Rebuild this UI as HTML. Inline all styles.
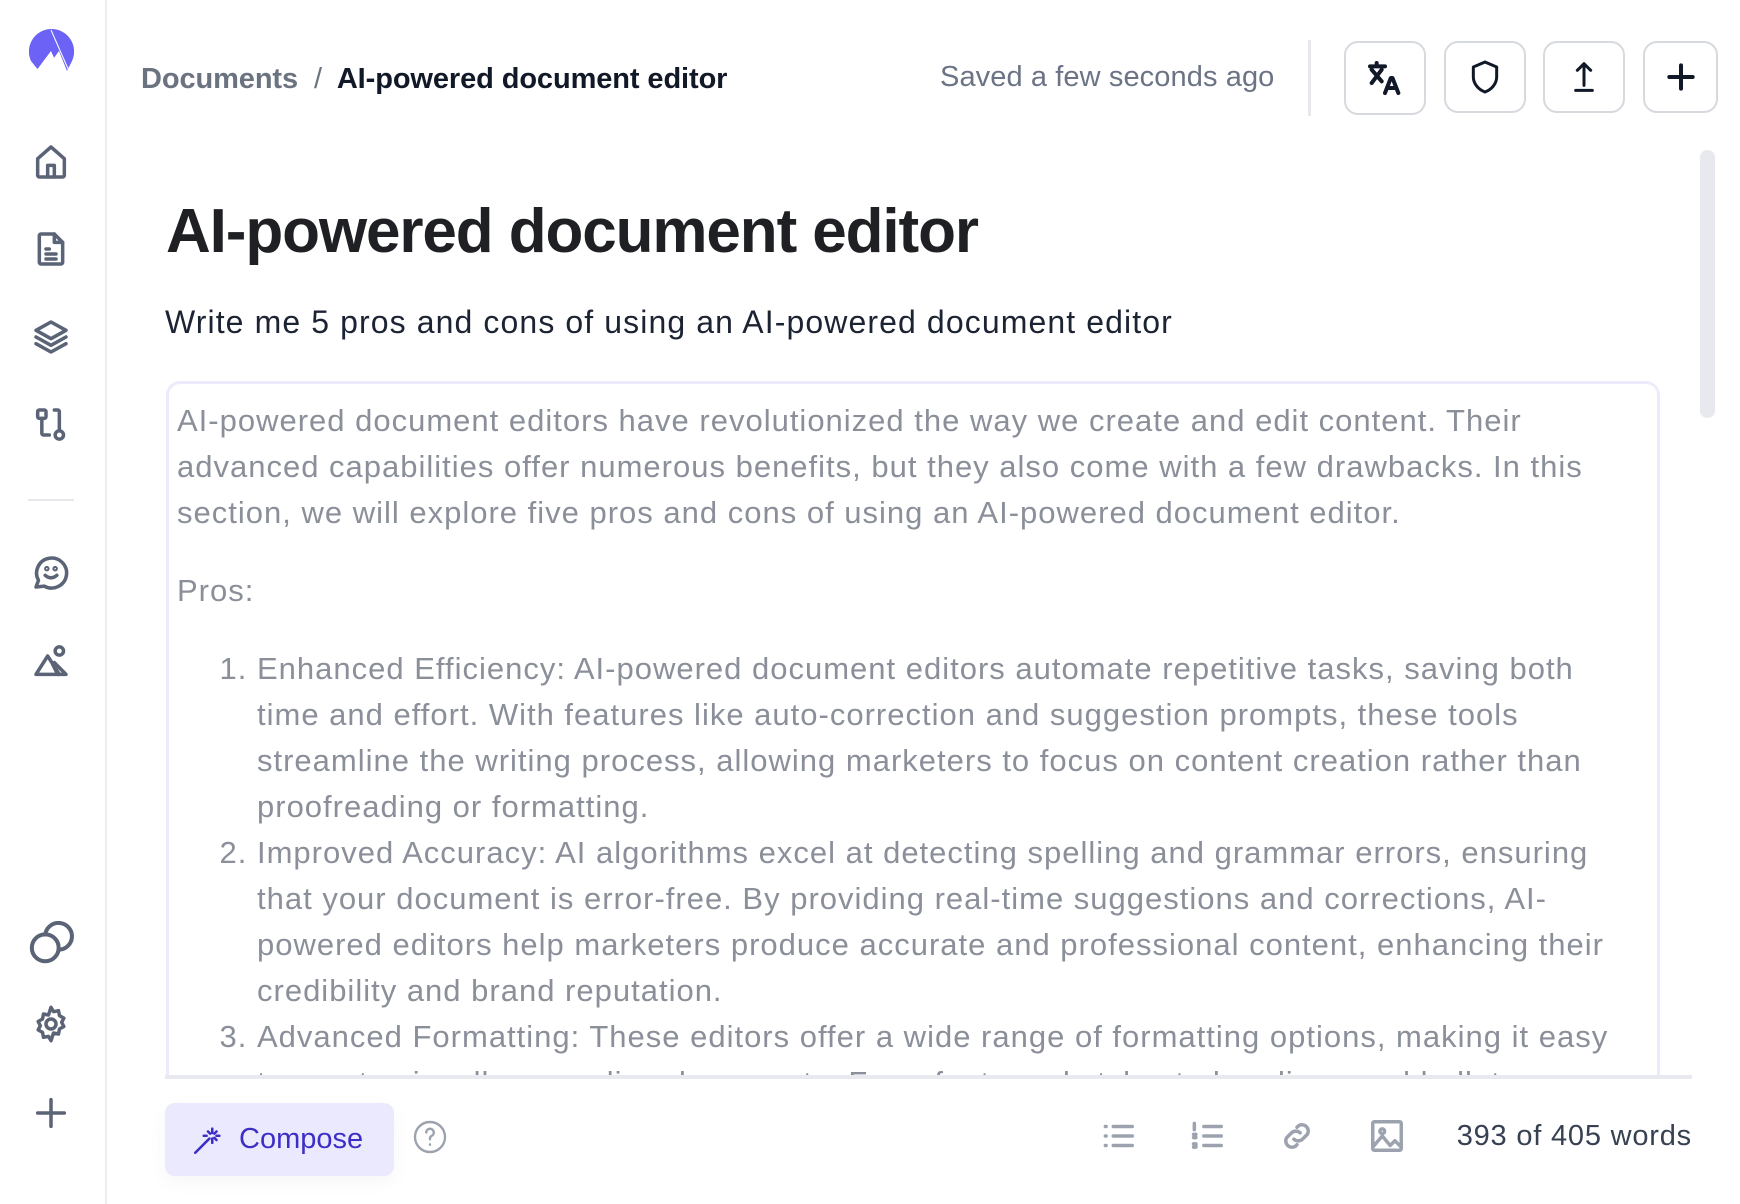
<!DOCTYPE html>
<html><head><meta charset="utf-8"><style>
*{margin:0;padding:0;box-sizing:border-box}
body{width:1740px;height:1204px;background:#fff;font-family:"Liberation Sans",sans-serif;position:relative;overflow:hidden}
.side{position:absolute;left:0;top:0;width:107px;height:1204px;border-right:2px solid #eceef2}
.ic{position:absolute;left:31px;width:40px;height:40px}
.ic svg{width:40px;height:40px;fill:none;stroke:#5b6477;stroke-width:2.1;stroke-linecap:round;stroke-linejoin:round}
.abs{position:absolute}
.btn{position:absolute;top:41px;height:74px;border:2px solid #d6d9de;border-radius:14px;display:flex;align-items:center;justify-content:center}
.btn svg{width:40px;height:40px;fill:none;stroke:#111827;stroke-width:2.4;stroke-linecap:round;stroke-linejoin:round}
.box{position:absolute;left:166px;top:381px;width:1494px;height:695px;border:3px solid #ecebfd;border-bottom:none;border-radius:14px 14px 0 0;overflow:hidden;color:#8a8f99;font-size:31px;letter-spacing:1px;line-height:46px;padding:14px 0 0 8px}
.box ol{margin-left:40px;padding-left:40px;padding-right:40px}
.tb svg{width:38px;height:38px;fill:none;stroke:#9ca3af;stroke-width:2.2;stroke-linecap:round;stroke-linejoin:round}
</style></head><body>
<div class="side">
 <svg class="abs" style="left:29px;top:29px" width="45" height="45" viewBox="0 0 45 45"><path d="M22.5 0A22.5 22.5 0 0 1 43 32L38 42L30 22L22 33L10 42L2 32A22.5 22.5 0 0 1 22.5 0Z" fill="#6c63f6"/><path d="M7 42 L22 22 L31 42Z" fill="#fff"/><line x1="22" y1="1" x2="40" y2="42" stroke="#fff" stroke-width="1"/></svg>
 <div class="ic" style="top:142px"><svg viewBox="0 0 24 24"><path d="M4 10L12 3L20 10V20a1 1 0 0 1-1 1H5a1 1 0 0 1-1-1Z"/><path d="M10 21v-7h4v7"/></svg></div>
 <div class="ic" style="top:229px"><svg viewBox="0 0 24 24"><path d="M14 3H6a1 1 0 0 0-1 1v16a1 1 0 0 0 1 1h12a1 1 0 0 0 1-1V8Z"/><path d="M14 3v5h5M9 12h2M9 15h6M9 18h6"/></svg></div>
 <div class="ic" style="top:317px"><svg viewBox="0 0 24 24"><path d="M12 3L21 8L12 13L3 8Z"/><path d="M3 12l9 5 9-5M3 16l9 5 9-5"/></svg></div>
 <div class="ic" style="top:405px"><svg viewBox="0 0 24 24"><rect x="4" y="3" width="5" height="5" rx="1"/><path d="M6.5 8v9a1 1 0 0 0 1 1H11"/><path d="M14 3h2a1 1 0 0 1 1 1v11"/><circle cx="17" cy="18" r="2.5"/></svg></div>
 <div class="abs" style="left:28px;top:499px;width:46px;height:2px;background:#e6e8ec"></div>
 <div class="ic" style="top:552px"><svg viewBox="0 0 24 24"><path d="M3 21l1.5-4A9 9 0 1 1 8 20.5Z"/><circle cx="9.5" cy="10" r=".6"/><circle cx="14.5" cy="10" r=".6"/><path d="M8.5 14q3.5 3 7 0"/></svg></div>
 <div class="ic" style="top:641px"><svg viewBox="0 0 24 24"><path d="M3 20L10 9L17 20Z"/><path d="M13 14l3 6h5L14 13"/><circle cx="17" cy="6" r="2.5"/></svg></div>
 <div class="ic" style="top:921px;left:28px;width:46px;height:46px"><svg style="width:46px;height:46px" viewBox="0 0 24 24"><circle cx="9" cy="14" r="7"/><path d="M9 7a7 7 0 1 1 7 8"/></svg></div>
 <div class="ic" style="top:1004px"><svg viewBox="0 0 24 24"><circle cx="12" cy="12" r="3"/><path d="M12 2l1.5 2.6 3-.6.6 3 2.6 1.5-1.3 2.5 1.3 2.5-2.6 1.5-.6 3-3-.6L12 22l-1.5-2.6-3 .6-.6-3L4.3 15.5 5.6 13 4.3 10.5 6.9 9l.6-3 3 .6Z"/></svg></div>
 <div class="ic" style="top:1093px"><svg viewBox="0 0 24 24"><path d="M12 4v16M4 12h16"/></svg></div>
</div>

<div class="abs" style="left:141px;top:63px;font-size:29px;color:#6b7280;font-weight:bold;letter-spacing:-0.1px">Documents <span style="font-weight:normal;margin:0 8px">/</span> <span style="color:#111827">AI-powered document editor</span></div>
<div class="abs" style="left:940px;top:61px;font-size:29px;color:#6b7385;letter-spacing:0.1px">Saved a few seconds ago</div>
<div class="abs" style="left:1308px;top:40px;width:3px;height:76px;background:#e6e8ec"></div>
<div class="btn" style="left:1344px;width:82px"><svg viewBox="0 0 24 24"><path d="M3 5h9M7 3v2M4 7l6 7M10 7l-6 8"/><path d="M12 21l3.5-9h1L20 21M13.5 18h5"/></svg></div>
<div class="btn" style="left:1444px;width:82px;height:72px"><svg viewBox="0 0 24 24" style="stroke-width:1.8"><path d="M12 3L19 6V12C19 16 16 19.5 12 21C8 19.5 5 16 5 12V6Z"/></svg></div>
<div class="btn" style="left:1543px;width:82px;height:72px"><svg viewBox="0 0 24 24" style="stroke-width:1.8"><path d="M12 17V4M8 8l4-4 4 4M7 20h10"/></svg></div>
<div class="btn" style="left:1643px;width:75px;height:72px"><svg viewBox="0 0 24 24"><path d="M12 5v14M5 12h14"/></svg></div>

<div class="abs" style="left:1700px;top:150px;width:15px;height:268px;background:#e7e9ee;border-radius:8px"></div>

<div class="abs" style="left:166px;top:196px;font-size:62px;font-weight:bold;color:#1f2023;letter-spacing:-1.1px">AI-powered document editor</div>
<div class="abs" style="left:165px;top:304px;font-size:32px;color:#1c2333;letter-spacing:1.1px">Write me 5 pros and cons of using an AI-powered document editor</div>

<div class="box">
<p>AI-powered document editors have revolutionized the way we create and edit content. Their advanced capabilities offer numerous benefits, but they also come with a few drawbacks. In this section, we will explore five pros and cons of using an AI-powered document editor.</p>
<p style="margin-top:32px">Pros:</p>
<ol style="margin-top:32px">
<li>Enhanced Efficiency: AI-powered document editors automate repetitive tasks, saving both time and effort. With features like auto-correction and suggestion prompts, these tools streamline the writing process, allowing marketers to focus on content creation rather than proofreading or formatting.</li>
<li>Improved Accuracy: AI algorithms excel at detecting spelling and grammar errors, ensuring that your document is error-free. By providing real-time suggestions and corrections, AI-powered editors help marketers produce accurate and professional content, enhancing their credibility and brand reputation.</li>
<li>Advanced Formatting: These editors offer a wide range of formatting options, making it easy to create visually appealing documents. From fonts and styles to headings and bullets.</li>
</ol>
</div>
<div class="abs" style="left:165px;top:1075px;width:1527px;height:4px;background:#e8eaef"></div>

<div class="abs" style="left:165px;top:1103px;width:229px;height:73px;background:#ebe9fd;border-radius:10px;box-shadow:0 6px 20px rgba(0,0,0,.04);color:#3d2fc6;font-size:29px;display:flex;align-items:center;padding-left:26px">
<svg width="34" height="34" viewBox="0 0 24 24" style="fill:none;stroke:#3d2fc6;stroke-width:1.8;stroke-linecap:round;margin-right:14px"><path d="M3 21L13 11M15 4v3M15 11v3M11 9h-2M20 9h-2M12 6l1.5 1.5M18 12l-1.5-1.5M18 6l-1.5 1.5"/></svg>Compose</div>
<svg class="abs" style="left:412px;top:1119px" width="36" height="36" viewBox="0 0 24 24" fill="none" stroke="#9ca3af" stroke-width="1.6" stroke-linecap="round"><circle cx="12" cy="12" r="10"/><path d="M9.5 9a2.5 2.5 0 1 1 3.5 2.3c-.7.3-1 .9-1 1.7v.5M12 17v.2"/></svg>
<div class="tb">
<svg class="abs" style="left:1099px;top:1117px" viewBox="0 0 24 24"><path d="M9 6h12M9 12h12M9 18h12M4 6h.5M4 12h.5M4 18h.5"/></svg>
<svg class="abs" style="left:1188px;top:1117px" viewBox="0 0 24 24"><path d="M10 6h11M10 12h11M10 18h11M4 4v4M3.5 11h1.5l-1.5 2h1.5M3.5 17h1.5v2h-1.5"/></svg>
<svg class="abs" style="left:1278px;top:1117px" viewBox="0 0 24 24"><path d="M10 14a4 4 0 0 0 5.5 0l3-3a4 4 0 0 0-5.5-5.5l-1 1M14 10a4 4 0 0 0-5.5 0l-3 3a4 4 0 0 0 5.5 5.5l1-1"/></svg>
<svg class="abs" style="left:1368px;top:1117px" viewBox="0 0 24 24"><rect x="3" y="3" width="18" height="18" rx="1"/><circle cx="9" cy="9" r="1.5"/><path d="M3 19l6-7 5 6 3-3 4 4"/></svg>
</div>
<div class="abs" style="right:48px;top:1120px;font-size:29px;color:#374151;letter-spacing:0.8px">393 of 405 words</div>
</body></html>
